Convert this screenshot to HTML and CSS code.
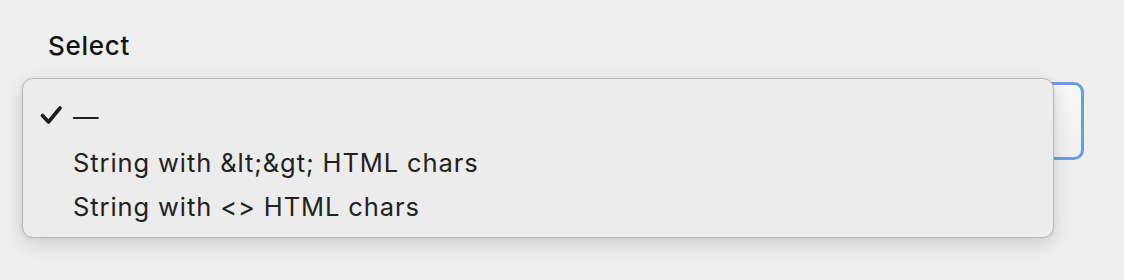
FILE: index.html
```html
<!DOCTYPE html>
<html>
<head>
<meta charset="utf-8">
<link rel="stylesheet" href="styles.css">
</head>
<body>
<div class="field">
  <label class="label">Select</label>
  <div class="select-wrap">
    <div class="select"></div>
    <div class="menu">
      <div class="item selected">
        <svg class="check" width="22" height="20" viewBox="0 0 22 20"><path d="M2.5 10.5 L8.5 17 L20 3" fill="none" stroke="#1e1e1e" stroke-width="3.6" stroke-linecap="round" stroke-linejoin="round"/></svg>
        <span class="text">—</span>
      </div>
      <div class="item"><span class="text">String with &amp;lt;&amp;gt; HTML chars</span></div>
      <div class="item"><span class="text">String with &lt;&gt; HTML chars</span></div>
    </div>
  </div>
</div>
</body>
</html>
```
FILE: styles.css
```css
html, body {
  margin: 0;
  padding: 0;
  background: #efefef;
  font-family: Inter, "Noto Sans", "Liberation Sans", sans-serif;
  color: #222;
}
body {
  min-height: 280px;
}
.field {
  padding: 30px 40px 0 48px;
  display: flex;
  flex-direction: column;
}
.label {
  font-size: 26px;
  font-weight: 550;
  line-height: 32px;
  letter-spacing: 0.7px;
  color: #111;
}
.select-wrap {
  position: relative;
  margin-top: 20px;
}
.select {
  height: 72px;
  border: 3px solid #6b9fdc;
  border-radius: 10px;
  background: linear-gradient(#f8f8f8, #efefef);
}
.menu {
  position: absolute;
  left: -26px;
  top: -4px;
  width: 1032px;
  height: 160px;
  box-sizing: border-box;
  border: 1px solid #b8b8b8;
  border-radius: 11px;
  background: #ececec;
  box-shadow: 0 6px 18px rgba(0,0,0,0.14), 0 0 4px rgba(0,0,0,0.06);
  padding-top: 14px;
}
.item {
  position: relative;
  height: 46px;
  display: flex;
  align-items: center;
  padding-left: 50px;
  font-size: 25.5px;
  letter-spacing: 0.9px;
}
.item + .item + .item {
  height: 45px;
  margin-top: -1px;
}
.check {
  position: absolute;
  left: 17px;
  top: 12px;
}
```
